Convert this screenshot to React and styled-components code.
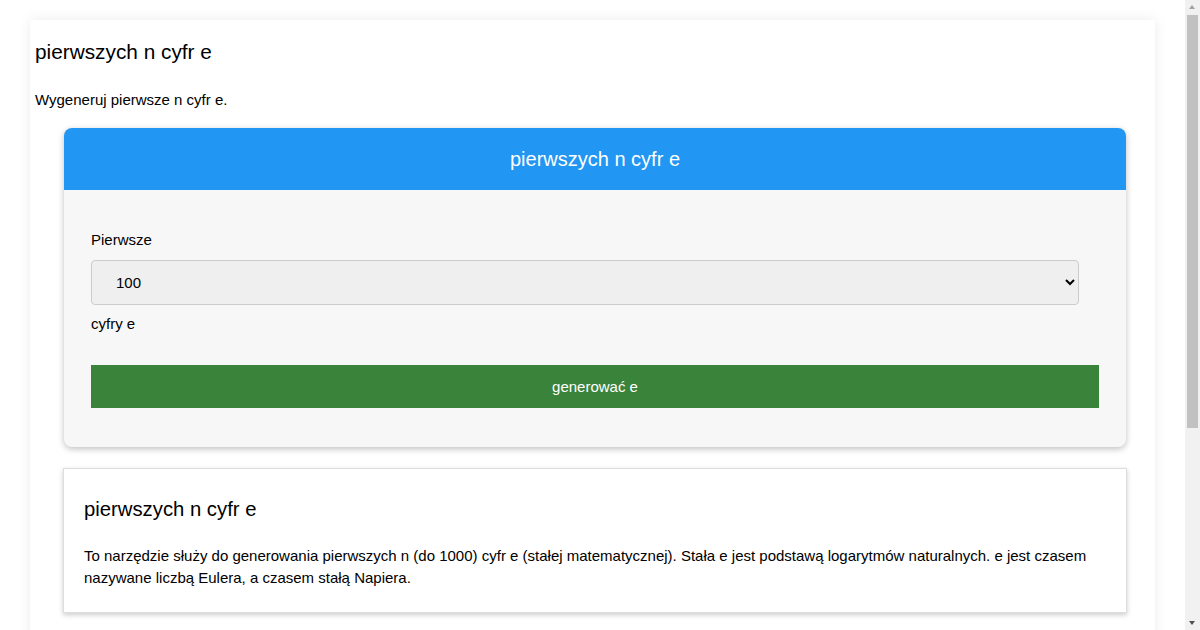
import React, { useState } from "react";
import styled, { createGlobalStyle } from "styled-components";

const GlobalStyle = createGlobalStyle`
  html, body {
    margin: 0;
    padding: 0;
    background: #fff;
    font-family: "Liberation Sans", Arial, sans-serif;
    color: #000;
  }
`;

const Viewport = styled.div`
  height: 100vh;
  overflow: hidden;
`;

/* fake browser scrollbar drawn over the right edge */
const ScrollTrack = styled.div`
  position: fixed;
  top: 0;
  right: 0;
  width: 15px;
  height: 100vh;
  background: #f1f1f1;
`;

const ScrollThumb = styled.div`
  position: absolute;
  top: 15px;
  left: 2px;
  right: 2px;
  height: 413px;
  background: #c1c1c1;
`;

const ScrollArrow = styled.div`
  position: absolute;
  left: 4px;
  width: 0;
  height: 0;
  border-left: 3.5px solid transparent;
  border-right: 3.5px solid transparent;
  ${(p) =>
    p.$up
      ? `top: 5px; border-bottom: 4px solid #a3a3a3;`
      : `bottom: 5px; border-top: 4px solid #505050;`}
`;

const Page = styled.div`
  width: 1125px;
  min-height: 887px;
  margin: 20px 0 20px 30px;
  padding: 0 5px;
  box-sizing: border-box;
  background: #fff;
  box-shadow: 0 0 12px rgba(0, 0, 0, 0.08);
  overflow: hidden;
`;

const Title = styled.h2`
  font-size: 20.8px;
  font-weight: normal;
  margin: 20px 0 28px;
  line-height: 23px;
`;

const Lead = styled.p`
  font-size: 15px;
  line-height: 17px;
  margin: 0 0 20px;
`;

const Card = styled.div`
  width: 1062px;
  margin-left: 29px;
  border-radius: 8px;
  overflow: hidden;
  background: #f7f7f7;
  box-shadow: 0 2px 6px rgba(0, 0, 0, 0.25);
`;

const CardHead = styled.div`
  height: 62px;
  background: #2196f3;
  color: #fff;
  font-size: 20px;
  display: flex;
  align-items: center;
  justify-content: center;
`;

const CardBody = styled.div`
  padding: 41px 27px 39px;
  display: flex;
  flex-direction: column;
`;

const Label = styled.label`
  font-size: 15px;
  line-height: 17px;
  margin-bottom: 12px;
`;

const Select = styled.select`
  width: calc(100% - 20px);
  height: 45px;
  padding: 0 20px;
  font-family: "Liberation Sans", Arial, sans-serif;
  font-size: 15px;
  color: #000;
  background: #efefef;
  border: 1px solid #ccc;
  border-radius: 4px;
  box-sizing: border-box;
`;

const Suffix = styled.div`
  font-size: 15px;
  line-height: 17px;
  margin: 10px 0 33px;
`;

const Button = styled.button`
  height: 43px;
  width: 100%;
  border: none;
  background: #3a833a;
  color: #fff;
  font-family: "Liberation Sans", Arial, sans-serif;
  font-size: 15px;
  cursor: pointer;
`;

const Info = styled.section`
  width: 1064px;
  margin: 21px 0 0 28px;
  padding: 29px 20px 23px;
  box-sizing: border-box;
  background: #fff;
  border: 1px solid #ddd;
  box-shadow: 0 2px 5px rgba(0, 0, 0, 0.2);
`;

const InfoTitle = styled.h3`
  font-size: 20.3px;
  font-weight: normal;
  line-height: 23px;
  margin: 0 0 24px;
`;

const InfoText = styled.p`
  font-size: 15px;
  line-height: 22px;
  margin: 0;
`;

const options = [10, 50, 100, 200, 500, 1000];

export default function App() {
  const [count, setCount] = useState(100);

  return (
    <Viewport>
      <GlobalStyle />
      <Page>
        <Title>pierwszych n cyfr e</Title>
        <Lead>Wygeneruj pierwsze n cyfr e.</Lead>
        <Card>
          <CardHead>pierwszych n cyfr e</CardHead>
          <CardBody>
            <Label htmlFor="digits">Pierwsze</Label>
            <Select
              id="digits"
              value={count}
              onChange={(e) => setCount(Number(e.target.value))}
            >
              {options.map((n) => (
                <option key={n} value={n}>
                  {n}
                </option>
              ))}
            </Select>
            <Suffix>cyfry e</Suffix>
            <Button>generować e</Button>
          </CardBody>
        </Card>
        <Info>
          <InfoTitle>pierwszych n cyfr e</InfoTitle>
          <InfoText>
            To narzędzie służy do generowania pierwszych n (do 1000) cyfr e
            (stałej matematycznej). Stała e jest podstawą logarytmów
            naturalnych. e jest czasem nazywane liczbą Eulera, a czasem stałą
            Napiera.
          </InfoText>
        </Info>
      </Page>
      <ScrollTrack>
        <ScrollArrow $up />
        <ScrollThumb />
        <ScrollArrow />
      </ScrollTrack>
    </Viewport>
  );
}
